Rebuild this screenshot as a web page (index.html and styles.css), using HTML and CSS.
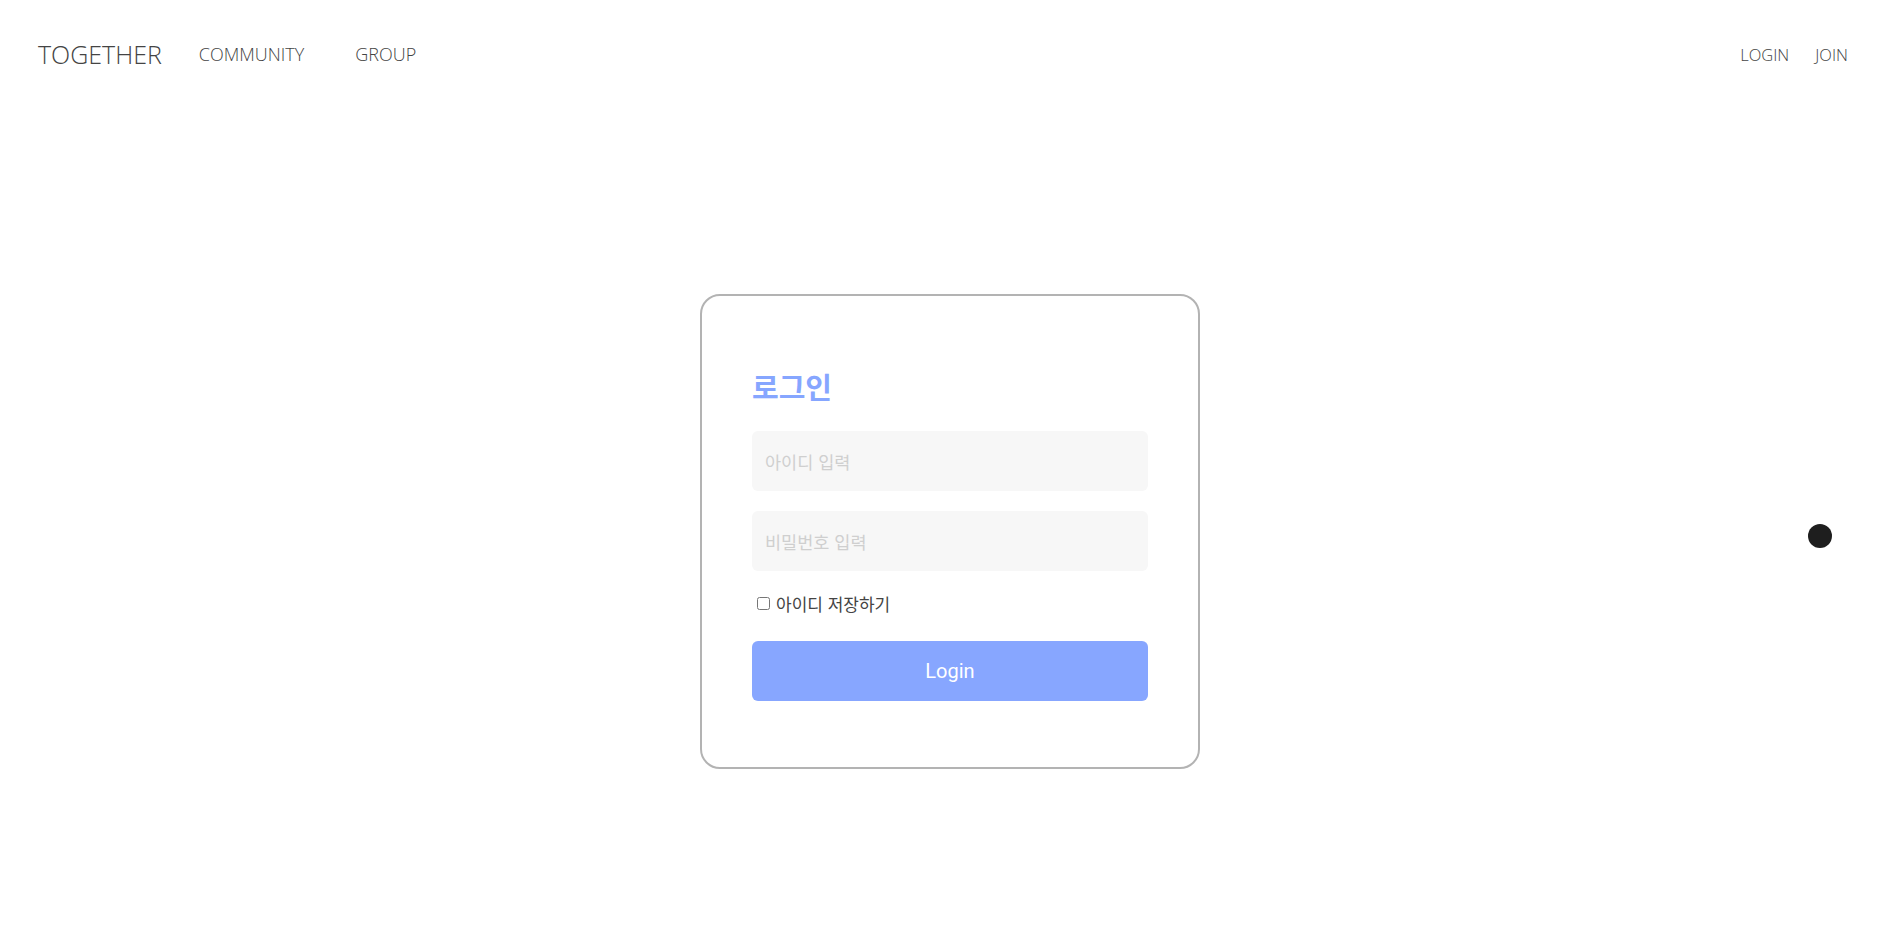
FILE: index.html
```html
<!DOCTYPE html>
<html lang="ko">
<head>
    <meta charset="UTF-8">
    <meta name="viewport" content="width=device-width, initial-scale=1.0">
    <title>TOGETHER</title>
    <link rel="stylesheet" href="styles.css">
</head>
<body>

<header class="top-bar">
    <div class="top-left">
        <a class="logo" href="#">TOGETHER</a>
        <nav class="main-nav">
            <a href="#" class="nav-community">COMMUNITY</a>
            <a href="#" class="nav-group">GROUP</a>
        </nav>
    </div>
    <div class="top-right">
        <a href="#">LOGIN</a>
        <a href="#">JOIN</a>
    </div>
</header>

<main class="login-page">
    <section class="login-box">
        <h2>로그인</h2>
        <form class="login-form">
            <input type="text" placeholder="아이디 입력">
            <input type="password" placeholder="비밀번호 입력">
            <label class="save-id">
                <input type="checkbox">
                <span>아이디 저장하기</span>
            </label>
            <button type="button">Login</button>
        </form>
    </section>
</main>

<div class="cursor-dot"></div>

</body>
</html>
```

FILE: styles.css
```css
body {
    font-family: 'Noto Sans CJK KR', 'Noto Sans', sans-serif;
    margin: 0;
    padding: 0;
    background-color: #fff;
    color: #333;
}

a {
    text-decoration: none;
    color: inherit;
}

.top-bar {
    height: 108px;
    display: flex;
    align-items: center;
    justify-content: space-between;
    padding: 0 52px 0 38px;
    font-family: 'Open Sans', sans-serif;
    font-weight: 300;
    color: #444;
}

.top-left {
    display: flex;
    align-items: center;
}

.logo {
    font-size: 25px;
}

.main-nav {
    display: flex;
    align-items: center;
    font-size: 18px;
}

.nav-community {
    margin-left: 37px;
}

.nav-group {
    margin-left: 51px;
}

.top-right {
    display: flex;
    gap: 26px;
    font-size: 16.5px;
}

.login-page {
    display: flex;
    justify-content: center;
    padding-top: 186px;
}

.login-box {
    width: 396px;
    padding: 70px 50px 66px;
    border: 2px solid #b3b3b3;
    border-radius: 20px;
}

.login-box h2 {
    margin: 0 0 25px;
    font-size: 29px;
    line-height: 40px;
    font-weight: 700;
    color: #86a6ff;
}

.login-form {
    display: flex;
    flex-direction: column;
}

.login-form input[type="text"],
.login-form input[type="password"] {
    height: 60px;
    box-sizing: border-box;
    border: none;
    border-radius: 6px;
    background-color: #f7f7f7;
    padding: 0 13px;
    margin-bottom: 20px;
    font-family: inherit;
    font-size: 17.5px;
    outline: none;
}

.login-form input::placeholder {
    color: #cfcfcf;
}

.save-id {
    display: flex;
    align-items: center;
    height: 24px;
    font-size: 17px;
    color: #444;
    margin: 0 0 26px;
}

.save-id input {
    margin: 0 6px 0 5px;
    width: 13px;
    height: 13px;
}

.login-form button {
    height: 60px;
    border: none;
    border-radius: 6px;
    background-color: #87a6ff;
    color: #fff;
    font-family: 'Roboto', sans-serif;
    font-size: 20px;
    cursor: pointer;
}

.cursor-dot {
    position: fixed;
    left: 1808px;
    top: 524px;
    width: 24px;
    height: 24px;
    border-radius: 50%;
    background-color: #1e1e1e;
}
```
